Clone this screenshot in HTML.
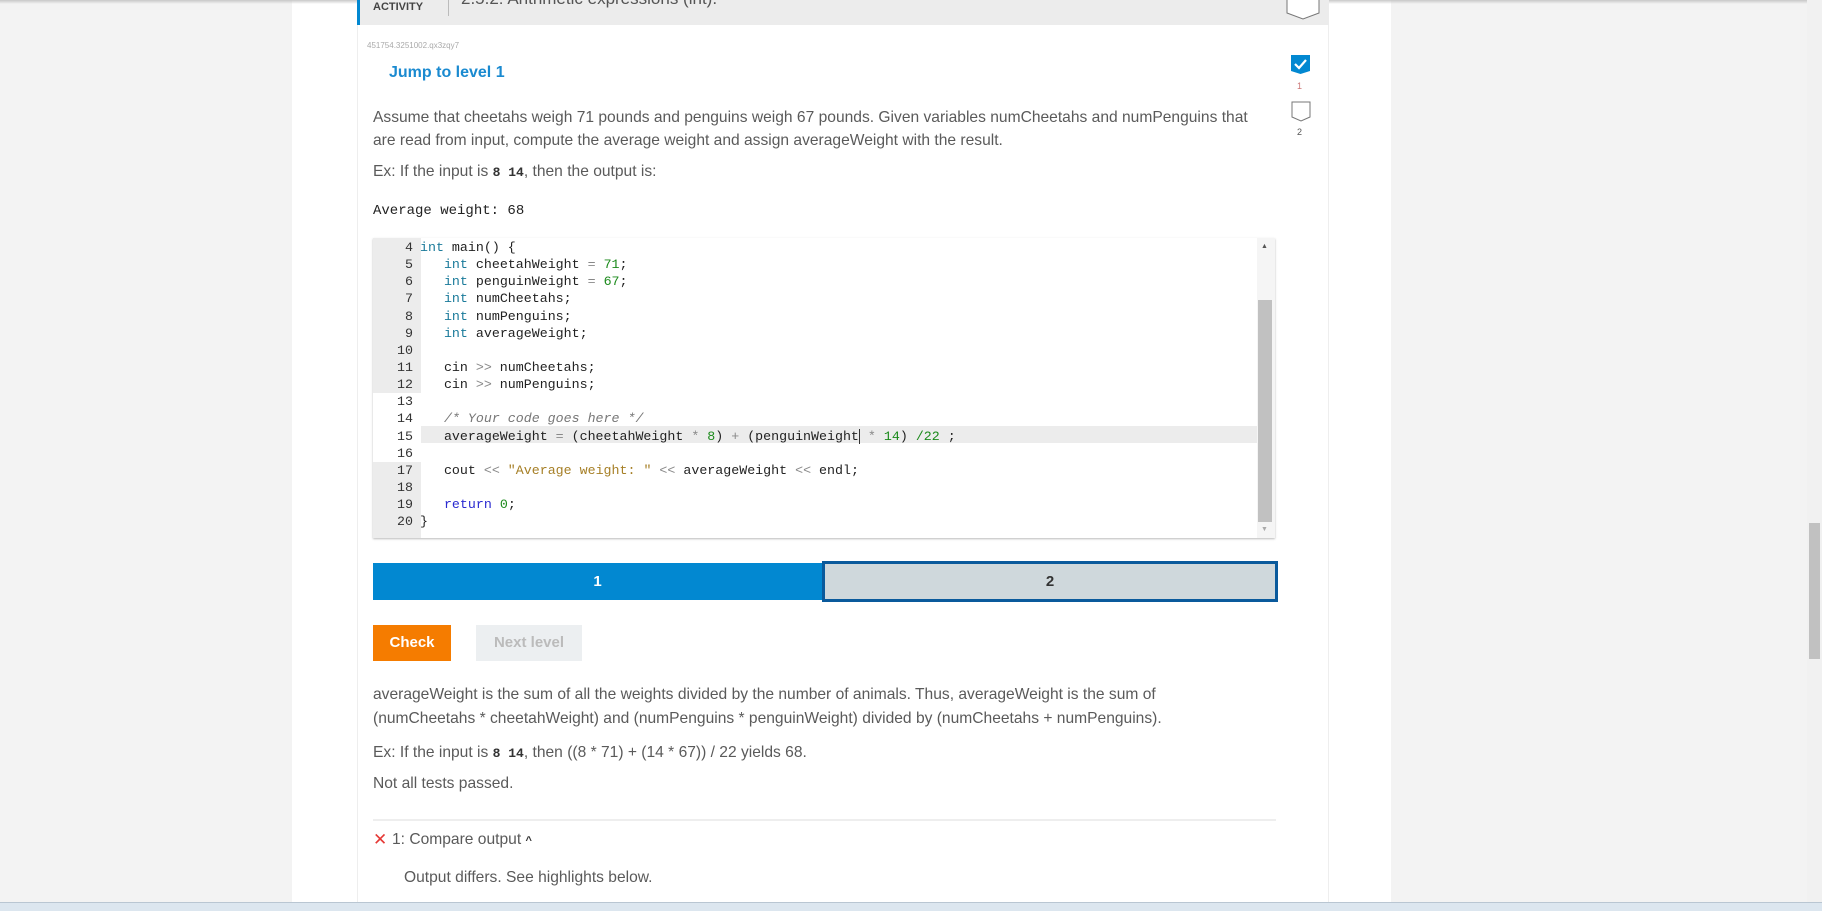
<!DOCTYPE html>
<html><head><meta charset="utf-8"><style>
*{margin:0;padding:0;box-sizing:border-box}
body{width:1822px;height:911px;overflow:hidden;background:#f3f3f3;font-family:"Liberation Sans",sans-serif;position:relative;color:#555}
.a{position:absolute}
.t{font-size:15.6px;color:#5a5a5a;white-space:nowrap}
.code{font-family:"Liberation Mono",monospace;font-size:13.3px;white-space:pre;color:#222}
.k{color:#1a7a9a}.n{color:#1b8a1b}.o{color:#888}.c{color:#777;font-style:italic}.s{color:#a67f26}.r{color:#2a2ad0}
</style></head><body>
<div class="a" style="left:292px;top:0;width:1099px;height:902px;background:#fff"></div>
<div class="a" style="left:357px;top:0;width:972px;height:902px;background:#fff;border-left:1px solid #eee;border-right:1px solid #eee"></div>
<div class="a" style="left:0;top:0;width:1822px;height:4px;background:linear-gradient(#c8c8c8,#f3f3f300)"></div>
<div class="a" style="left:357px;top:0;width:972px;height:25px;background:#ececec"></div>
<div class="a" style="left:357px;top:0;width:3px;height:25px;background:#0288d1"></div>
<div class="a" style="left:373px;top:1px;font-size:11px;font-weight:bold;color:#444">ACTIVITY</div>
<div class="a" style="left:448px;top:0;width:1px;height:16px;background:#bbb"></div>
<div class="a" style="left:461px;top:-11px;font-size:17px;color:#555">2.5.2: Arithmetic expressions (int).</div>
<svg class="a" style="left:1286px;top:0" width="34" height="20"><path d="M1 0V13L17 19L33 13V0" fill="#fff" stroke="#777" stroke-width="1"/></svg>
<div class="a" style="left:367px;top:41px;font-size:8px;color:#aaa">451754.3251002.qx3zqy7</div>
<div class="a" style="left:389px;top:64px;font-size:16px;font-weight:bold;color:#1a8ad0">Jump to level 1</div>
<svg class="a" style="left:1291px;top:55px" width="19" height="19"><path d="M0 0H19V16L9.5 19L0 16Z" fill="#0288d1"/><path d="M4 9L8 13L15 5" stroke="#fff" stroke-width="2.2" fill="none"/></svg>
<div class="a" style="left:1297px;top:81px;font-size:9px;color:#c77">1</div>
<svg class="a" style="left:1291px;top:101px" width="20" height="21"><path d="M1 1H19V16L10 20L1 16Z" fill="#fff" stroke="#777"/></svg>
<div class="a" style="left:1297px;top:127px;font-size:9px;color:#555">2</div>
<div class="a t" style="left:373px;top:109px">Assume that cheetahs weigh 71 pounds and penguins weigh 67 pounds. Given variables numCheetahs and numPenguins that</div>
<div class="a t" style="left:373px;top:132px">are read from input, compute the average weight and assign averageWeight with the result.</div>
<div class="a t" style="left:373px;top:163px">Ex: If the input is <span class="code" style="font-size:13px;color:#333;font-weight:bold">8 14</span>, then the output is:</div>
<div class="a code" style="left:373px;top:203px;font-size:14px;color:#222">Average weight: 68</div>
<div class="a" style="left:373px;top:238px;width:902px;height:300px;background:#fff;box-shadow:0 1px 2px #bbb"></div>
<div class="a" style="left:373px;top:238px;width:48px;height:300px;background:#ececec"></div>
<div class="a" style="left:373px;top:393px;width:48px;height:69px;background:#fff"></div>
<div class="a" style="left:421px;top:426px;width:836px;height:17px;background:#ececec"></div>
<div class="a" style="left:1257px;top:238px;width:18px;height:300px;background:#f5f5f5"></div>
<div class="a" style="left:1258px;top:300px;width:14px;height:222px;background:#c1c1c1"></div>
<div class="a" style="left:1261px;top:243px;font-size:7px;color:#555">▲</div>
<div class="a" style="left:1261px;top:526px;font-size:7px;color:#aaa">▼</div>
<div class="a code" style="left:373px;top:239px;width:40px;text-align:right;line-height:17.14px;color:#333">4
5
6
7
8
9
10
11
12
13
14
15
16
17
18
19
20</div>
<div class="a code" style="left:420px;top:239px;line-height:17.14px"><span class="k">int</span> main() {
   <span class="k">int</span> cheetahWeight <span class="o">=</span> <span class="n">71</span>;
   <span class="k">int</span> penguinWeight <span class="o">=</span> <span class="n">67</span>;
   <span class="k">int</span> numCheetahs;
   <span class="k">int</span> numPenguins;
   <span class="k">int</span> averageWeight;

   cin <span class="o">&gt;&gt;</span> numCheetahs;
   cin <span class="o">&gt;&gt;</span> numPenguins;

   <span class="c">/* Your code goes here */</span>
   averageWeight <span class="o">=</span> (cheetahWeight <span class="o">*</span> <span class="n">8</span>) <span class="o">+</span> (penguinWeight<span style="border-right:1px solid #333"></span> <span class="o">*</span> <span class="n">14</span>) <span class="n">/22</span> ;

   cout <span class="o">&lt;&lt;</span> <span class="s">"Average weight: "</span> <span class="o">&lt;&lt;</span> averageWeight <span class="o">&lt;&lt;</span> endl;

   <span class="r">return</span> <span class="n">0</span>;
}</div>
<div class="a" style="left:373px;top:563px;width:449px;height:37px;background:#0288d1;color:#fff;font-weight:bold;font-size:15px;text-align:center;line-height:37px">1</div>
<div class="a" style="left:822px;top:561px;width:456px;height:41px;background:#cfd8dc;border:3px solid #0a5a9c;color:#333;font-weight:bold;font-size:15px;text-align:center;line-height:35px">2</div>
<div class="a" style="left:373px;top:625px;width:78px;height:36px;background:#f57c00;color:#fff;font-weight:bold;font-size:15px;text-align:center;line-height:36px">Check</div>
<div class="a" style="left:476px;top:625px;width:106px;height:36px;background:#eceff1;color:#bbb;font-weight:bold;font-size:15px;text-align:center;line-height:36px">Next level</div>
<div class="a t" style="left:373px;top:686px">averageWeight is the sum of all the weights divided by the number of animals. Thus, averageWeight is the sum of</div>
<div class="a t" style="left:373px;top:710px">(numCheetahs * cheetahWeight) and (numPenguins * penguinWeight) divided by (numCheetahs + numPenguins).</div>
<div class="a t" style="left:373px;top:744px">Ex: If the input is <span class="code" style="font-size:13px;color:#333;font-weight:bold">8 14</span>, then ((8 * 71) + (14 * 67)) / 22 yields 68.</div>
<div class="a t" style="left:373px;top:775px">Not all tests passed.</div>
<div class="a" style="left:373px;top:819px;width:903px;height:2px;background:#eee"></div>
<div class="a" style="left:373px;top:830px;font-size:17px;color:#e53935">✕</div>
<div class="a t" style="left:392px;top:831px">1: Compare output <span style="font-size:11px;color:#333;font-weight:bold">^</span></div>
<div class="a t" style="left:404px;top:869px">Output differs. See highlights below.</div>
<div class="a" style="left:1807px;top:0;width:15px;height:902px;background:#f1f1f1"></div>
<div class="a" style="left:1809px;top:523px;width:11px;height:136px;background:#c1c1c1"></div>
<div class="a" style="left:0;top:902px;width:1822px;height:9px;background:#dce6ef;border-top:1px solid #b9c6d2"></div>
</body></html>
